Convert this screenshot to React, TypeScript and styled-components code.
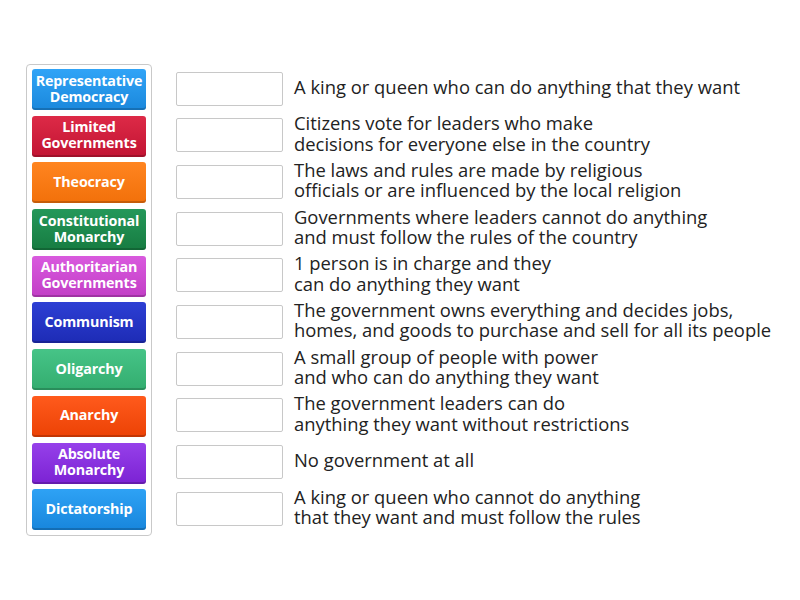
import React from 'react';
import styled, { createGlobalStyle } from 'styled-components';

const GlobalStyle = createGlobalStyle`
  body {
    margin: 0;
    background: #ffffff;
    font-family: "Open Sans", "Liberation Sans", sans-serif;
  }
`;

type Tile = { label: string; top: string; bottom: string };

const tiles: Tile[] = [
  { label: 'Representative Democracy', top: '#30a4f7', bottom: '#1b88dc' },
  { label: 'Limited Governments', top: '#dd2a47', bottom: '#c21433' },
  { label: 'Theocracy', top: '#ff8520', bottom: '#f2700a' },
  { label: 'Constitutional Monarchy', top: '#24985a', bottom: '#177c41' },
  { label: 'Authoritarian Governments', top: '#d95ade', bottom: '#c23ec6' },
  { label: 'Communism', top: '#2d3fd4', bottom: '#1d2bb5' },
  { label: 'Oligarchy', top: '#46c487', bottom: '#33ad6f' },
  { label: 'Anarchy', top: '#ff5a1c', bottom: '#ec4205' },
  { label: 'Absolute Monarchy', top: '#9640ea', bottom: '#7b22d3' },
  { label: 'Dictatorship', top: '#2ea2f5', bottom: '#1886dc' },
];

const definitions: string[] = [
  'A king or queen who can do anything that they want',
  'Citizens vote for leaders who make\ndecisions for everyone else in the country',
  'The laws and rules are made by religious\nofficials or are influenced by the local religion',
  'Governments where leaders cannot do anything\nand must follow the rules of the country',
  '1 person is in charge and they\ncan do anything they want',
  'The government owns everything and decides jobs,\nhomes, and goods to purchase and sell for all its people',
  'A small group of people with power\nand who can do anything they want',
  'The government leaders can do\nanything they want without restrictions',
  'No government at all',
  'A king or queen who cannot do anything\nthat they want and must follow the rules',
];

const Page = styled.div`
  display: flex;
  align-items: flex-start;
  padding: 64px 0 0 26px;
`;

const Panel = styled.div`
  display: flex;
  flex-direction: column;
  gap: 5.7px;
  width: 114px;
  padding: 4px 5px 5px 5px;
  border: 1px solid #c9c9c9;
  border-radius: 4px;
`;

const TileBox = styled.div<{ $top: string; $bottom: string }>`
  height: 41px;
  box-sizing: border-box;
  display: flex;
  align-items: center;
  justify-content: center;
  text-align: center;
  padding: 0 0 2px;
  border-radius: 3px;
  background: linear-gradient(${(p) => p.$top}, ${(p) => p.$bottom});
  box-shadow: inset 0 -2px 0 rgba(0, 0, 0, 0.18);
  color: #ffffff;
  font-weight: 700;
  font-size: 14.3px;
  line-height: 16px;
  letter-spacing: -0.15px;
  white-space: pre-line;
`;

const Matches = styled.div`
  display: flex;
  flex-direction: column;
  gap: 5.7px;
  margin-left: 24px;
  padding-top: 5px;
`;

const Row = styled.div`
  height: 41px;
  display: flex;
  align-items: center;
`;

const DropBox = styled.div`
  flex: none;
  width: 107px;
  height: 34px;
  box-sizing: border-box;
  margin-top: -2px;
  border: 1px solid #c8c8c8;
  border-radius: 2px;
  background: #ffffff;
`;

const Definition = styled.div`
  margin-left: 11px;
  margin-top: -5px;
  color: #222222;
  font-size: 18.4px;
  line-height: 20.5px;
  white-space: pre;
`;

export default function App() {
  return (
    <>
      <GlobalStyle />
      <Page>
        <Panel>
          {tiles.map((t) => (
            <TileBox key={t.label} $top={t.top} $bottom={t.bottom}>
              {t.label.replace(' ', '\n')}
            </TileBox>
          ))}
        </Panel>
        <Matches>
          {definitions.map((text, i) => (
            <Row key={i}>
              <DropBox />
              <Definition>{text}</Definition>
            </Row>
          ))}
        </Matches>
      </Page>
    </>
  );
}
